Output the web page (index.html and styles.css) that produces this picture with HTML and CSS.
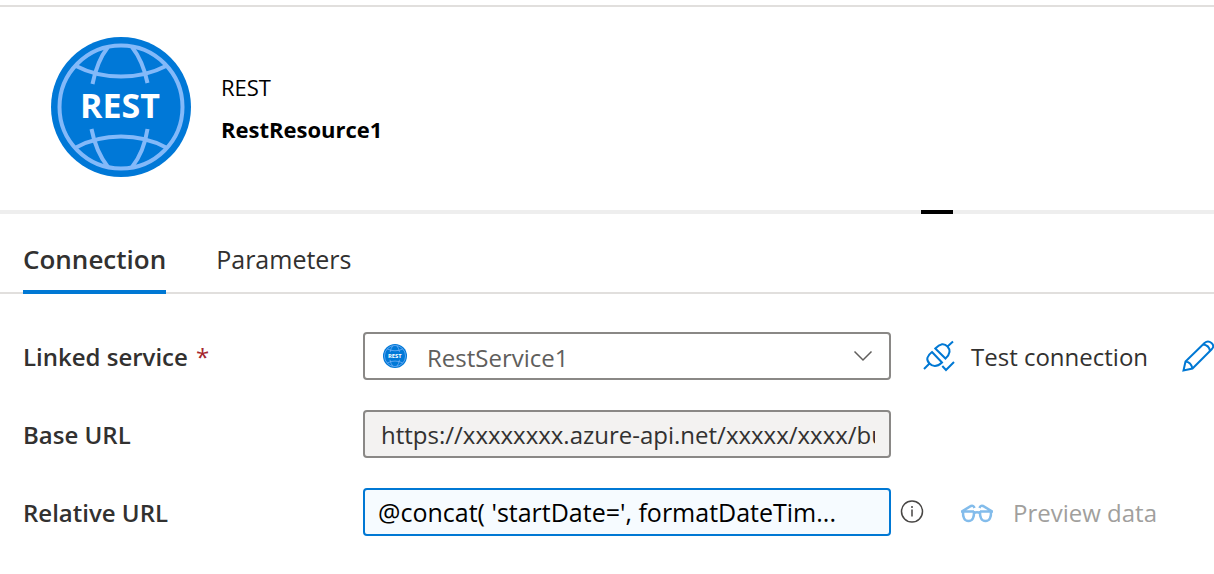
FILE: index.html
```html
<!DOCTYPE html>
<html lang="en">
<head>
  <meta charset="UTF-8" />
  <meta name="viewport" content="width=device-width, initial-scale=1.0"/>
  <title>RestResource1</title>
  <link rel="stylesheet" href="styles.css">
</head>
<body>
  <header class="resource">
    <svg class="resource-icon" viewBox="0 0 140 140" role="img" aria-label="REST">
      <g id="restIcon">
        <circle cx="70" cy="70" r="70" fill="#0078d7"/>
        <g fill="none" stroke="#83b9f9" stroke-width="4">
          <circle cx="70" cy="70" r="61.5"/>
          <path d="M25 29Q45 39.500 70 39.500T115 29"/>
          <path d="M25 110.500Q45 99.500 70 99.500T115 110.500"/>
          <path d="M57 10Q46 24 41.500 47M81 10Q92 24 96.500 46"/>
          <path d="M40.500 92Q45 115 57 130M96.500 92Q93 115 81 130"/>
        </g>
        <text x="69" y="81" text-anchor="middle" class="rest-text">REST</text>
      </g>
    </svg>
    <div class="resource-info">
      <div class="resource-type">REST</div>
      <h1>RestResource1</h1>
    </div>
  </header>

  <div class="splitter"><div class="splitter-handle"></div></div>

  <nav class="tabs" role="tablist">
    <button class="tab active" role="tab" aria-selected="true">Connection</button>
    <button class="tab" role="tab" aria-selected="false">Parameters</button>
  </nav>

  <form class="connection-form">
    <div class="row">
      <label for="linkedService">Linked service <span class="required">*</span></label>
      <div class="field">
        <select id="linkedService">
          <option>RestService1</option>
        </select>
        <svg class="service-icon" viewBox="0 0 140 140" aria-hidden="true"><use href="#restIcon"/></svg>
        <svg class="chevron" viewBox="0 0 20 12" aria-hidden="true">
          <path d="M1.500 1.500L10 10L18.500 1.500" stroke-width="1.500"/>
        </svg>
      </div>
      <button type="button" class="action test">
        <svg viewBox="0 0 32 32" aria-hidden="true">
          <path d="M1 28L6.500 22.500M24.500 5.500L30 .5M9 11L19 21.500Q12 28 6.500 22.500T9 11ZM12.300 7.500L22.500 17.500Q29.500 11 24.500 5.500T12.300 7.500Z"/>
          <path d="M19.300 25L23 29L31 21"/>
        </svg>
        Test connection
      </button>
      <button type="button" class="action edit" aria-label="Edit">
        <svg viewBox="0 0 32 32" aria-hidden="true">
          <path d="M1.500 29.500L3.500 20.500L22.500 2Q26 -1 29.500 2T29.500 8.500L10.500 27.500ZM3.500 20.500Q9 21 10.500 27.500M21 3.500Q27 4 28 10"/>
        </svg>
      </button>
    </div>

    <div class="row">
      <label for="baseUrl">Base URL</label>
      <div class="field">
        <input type="text" id="baseUrl" class="base-url" value="https://xxxxxxxx.azure-api.net/xxxxx/xxxx/bu" readonly>
      </div>
    </div>

    <div class="row">
      <label for="relativeUrl">Relative URL</label>
      <div class="field">
        <input type="text" id="relativeUrl" class="relative-url" value="@concat( 'startDate=', formatDateTim...">
      </div>
      <svg class="info" viewBox="0 0 24 24" role="img" aria-label="Information">
        <circle cx="12" cy="11.500" r="10.500" stroke-width="1.500"/>
        <path d="M12 9.500V16.500M12 6V8" stroke-width="1.500"/>
      </svg>
      <button type="button" class="action preview" disabled>
        <svg viewBox="0 0 32 32" aria-hidden="true">
          <path d="M0 14.500H13M19 14.500H32M13 16Q16 14.500 19 16M1.500 14L10 9Q12.500 8 13.500 11M30.500 14L22 9Q19.500 8 18.500 11" stroke-width="2.500"/>
          <path d="M2 14Q1.500 24 7.500 24T13 14M19 14Q18.500 24 24.500 24T30 14" stroke-width="2.500"/>
        </svg>
        Preview data
      </button>
    </div>
  </form>
</body>
</html>
```

FILE: styles.css
```css
* {
  box-sizing: border-box;
}

body {
  margin: 5px 0 0;
  border-top: 2px solid #e1dfdd;
  font-family: "Open Sans", "Noto Sans", sans-serif;
  font-size: 24px;
  line-height: 32px;
  color: #323130;
  background-color: #fff;
  overflow-x: hidden;
}

button, input, select {
  font: inherit;
  color: inherit;
}

.rest-text {
  font-size: 34px;
  font-weight: 700;
  fill: #fff;
}

/* Resource header */
.resource {
  display: flex;
  align-items: center;
  gap: 30px;
  padding: 30px 51px 33px;
  color: #000;
}

.resource-icon {
  width: 140px;
  height: 140px;
}

.resource-info {
  padding-top: 1px;
  font-size: 22px;
  line-height: 42px;
}

.resource h1 {
  margin: 0;
  font-size: 22px;
  font-weight: 700;
}

.splitter {
  height: 4px;
  padding-left: 921px;
  background-color: #eee;
}

.splitter-handle {
  width: 32px;
  height: 4px;
  background-color: #000;
}

/* Tabs */
.tabs {
  display: flex;
  gap: 50px;
  padding: 0 23px;
  height: 80px;
  box-shadow: inset 0 -2px #e1dfdd;
}

.tab {
  padding: 14px 0 0;
  border: none;
  border-bottom: 4px solid transparent;
  background: none;
  font-size: 25px;
  cursor: pointer;
}

.tab.active {
  border-bottom-color: #0078d4;
  font-size: 26px;
  font-weight: 600;
}

/* Connection form */
.connection-form {
  display: flex;
  flex-direction: column;
  gap: 30px;
  padding: 38px 0 38px 23px;
}

.row {
  display: flex;
  align-items: center;
  height: 48px;
}

.row label {
  flex: 0 0 340px;
  padding-top: 2px;
  font-weight: 600;
}

.required {
  margin-left: 2px;
  color: #a4262c;
  font-weight: 400;
}

.field {
  position: relative;
  flex: 0 0 528px;
}

.field input, .field select {
  display: block;
  width: 100%;
  height: 48px;
  border: 2px solid #8a8886;
  border-radius: 4px;
  outline: none;
}

.field select {
  appearance: none;
  padding: 3px 60px 0 62px;
  background-color: #fff;
  color: #605e5c;
}

.service-icon {
  position: absolute;
  left: 20px;
  top: 12px;
  width: 24px;
  height: 24px;
}

.chevron {
  position: absolute;
  right: 18px;
  top: 18px;
  width: 20px;
  height: 12px;
  fill: none;
  stroke: #605e5c;
  pointer-events: none;
}

.field .base-url {
  padding: 0 14px 0 16px;
  background-color: #f3f2f1;
}

.field .relative-url {
  padding: 0 13px;
  border-color: #0078d4;
  background-color: #f6fbff;
  font-size: 25px;
  color: #000;
}

.action {
  display: flex;
  flex: none;
  align-items: center;
  gap: 16px;
  padding: 2px 0 0;
  border: none;
  background: none;
  white-space: nowrap;
  cursor: pointer;
}

.action svg {
  width: 32px;
  height: 32px;
  overflow: visible;
  fill: none;
  stroke: #0078d4;
  stroke-width: 2;
}

.test {
  margin-left: 32px;
}

.edit {
  margin-left: 34px;
}

.info {
  flex: none;
  width: 24px;
  height: 24px;
  margin-left: 9px;
  fill: none;
  stroke: #484644;
}

.preview {
  gap: 20px;
  margin-left: 37px;
  color: #a19f9d;
  cursor: default;
}

.preview svg {
  stroke: #83bceb;
}
```
